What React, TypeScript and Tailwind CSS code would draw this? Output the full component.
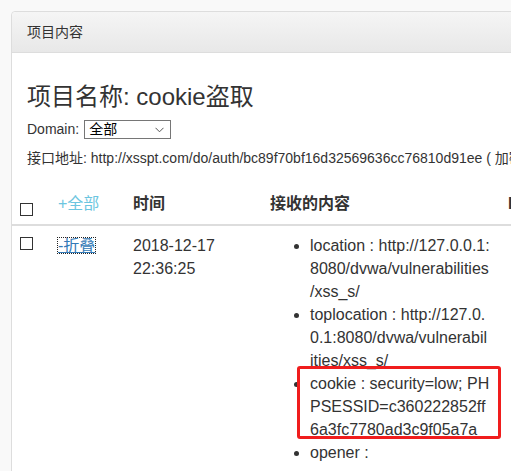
// lines are broken where the captured page broke them
const items = [
  { key: "location", lines: ["location : http://127.0.0.1:", "8080/dvwa/vulnerabilities", "/xss_s/"] },
  { key: "toplocation", lines: ["toplocation : http://127.0.", "0.1:8080/dvwa/vulnerabil", "ities/xss_s/"] },
  { key: "cookie", lines: ["cookie : security=low; PH", "PSESSID=c360222852ff", "6a3fc7780ad3c9f05a7a"], marked: true },
  { key: "opener", lines: ["opener :"] },
];

const Box = ({ className = "" }: { className?: string }) => (
  <span className={`block w-[13px] h-[13px] border border-[#333] bg-white ${className}`} />
);

export default function App() {
  return (
    <div className="w-[511px] h-[471px] overflow-hidden bg-[#f9f9f9] pt-[11px] pl-[11px] text-[#333] font-['Liberation_Sans','Noto_Sans_CJK_SC',sans-serif]">
      <div className="w-[900px] h-[600px] border border-[#ddd] rounded-[4px] bg-white">
        <div className="h-[41px] flex items-center px-[15px] text-[14px] bg-gradient-to-b from-[#f5f5f5] to-[#e8e8e8] border-b border-[#ddd] rounded-t-[4px]">
          项目内容
        </div>

        <div className="px-[15px] pt-[31px]">
          <h3 className="text-[24px] leading-[26px]">项目名称: cookie盗取</h3>

          <div className="mt-[10px] flex items-center h-[19px] text-[14px]">
            <span>Domain:</span>
            <div className="ml-[5px] w-[87px] h-[19px] border border-[#767676] bg-white flex items-center justify-between pl-[4px] pr-[6px] text-black">
              <span className="leading-[17px]">全部</span>
              <svg width="9" height="6" viewBox="0 0 9 6" fill="none">
                <path d="M0.5 0.8 L4.5 4.8 L8.5 0.8" stroke="#555" strokeWidth="1" />
              </svg>
            </div>
          </div>

          <p className="mt-[9px] text-[14px] leading-[20px] whitespace-nowrap">
            接口地址: http://xsspt.com/do/auth/bc89f70bf16d32569636cc76810d91ee ( 加密后的地址 )
          </p>
        </div>

        <div className="mt-[16px] text-[16px] leading-[23px]">
          <div className="flex border-b-2 border-[#ddd]">
            <div className="w-[38px] p-2">
              <Box className="mt-[11px]" />
            </div>
            <div className="w-[75px] p-2 text-[#6cc5e0]">+全部</div>
            <div className="w-[137px] p-2 font-bold">时间</div>
            <div className="w-[238px] p-2 font-bold">接收的内容</div>
            <div className="flex-1 p-2 font-bold">IP</div>
          </div>

          <div className="flex">
            <div className="w-[38px] p-2">
              <Box className="mt-[3px]" />
            </div>
            <div className="w-[75px] p-2">
              <span className="inline-block leading-[15px] text-[#337ab7] underline outline outline-1 outline-dotted outline-[#222]">
                -折叠
              </span>
            </div>
            <div className="w-[137px] p-2">2018-12-17 22:36:25</div>
            <div className="w-[238px] p-2">
              <ul className="list-disc pl-10">
                {items.map((it) => (
                  <li key={it.key} className="relative whitespace-nowrap">
                    {it.lines.map((line, i) => (
                      <span key={i}>
                        {i > 0 && <br />}
                        {line}
                      </span>
                    ))}
                    {it.marked && (
                      <div className="absolute left-[-13px] top-[-6px] w-[204px] h-[73px] border-[3px] border-[#f01d1d] rounded-[3px]" />
                    )}
                  </li>
                ))}
              </ul>
            </div>
            <div className="flex-1 p-2" />
          </div>
        </div>
      </div>
    </div>
  );
}
